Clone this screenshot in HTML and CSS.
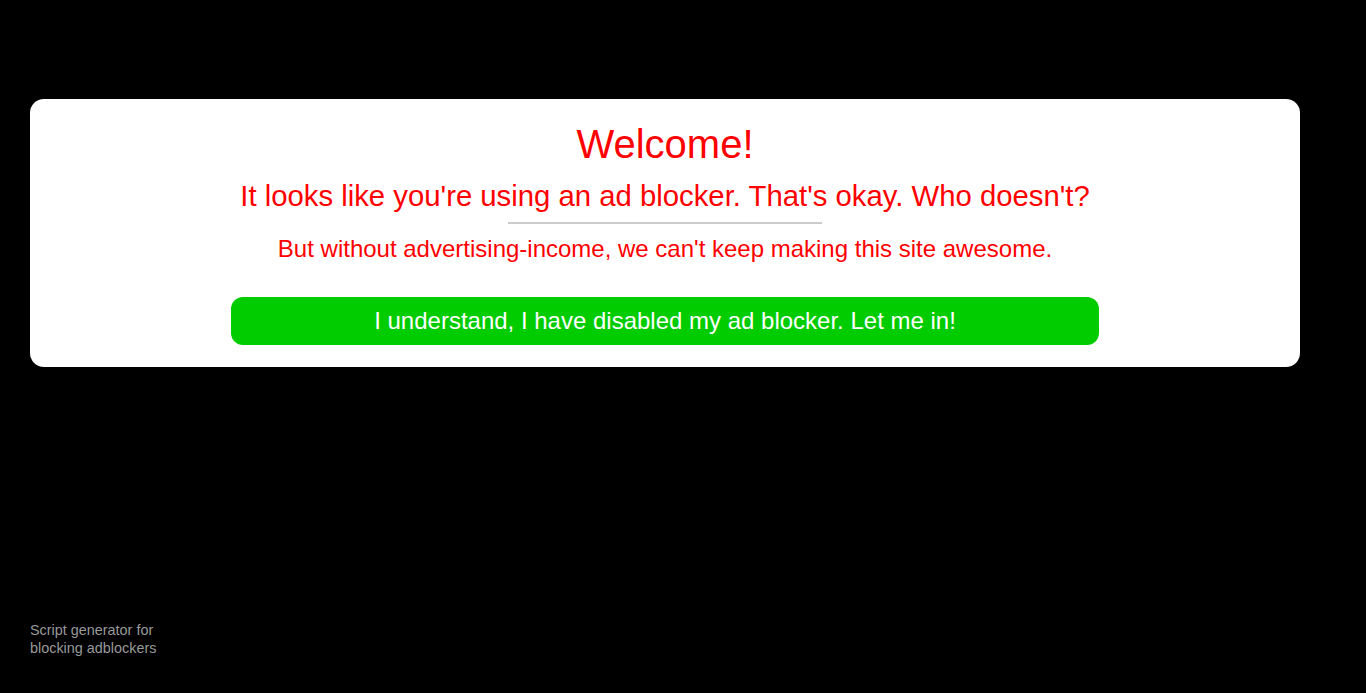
FILE: index.html
```html
<!DOCTYPE html>
<html lang="en">
<head>
<meta charset="utf-8">
<title>Welcome!</title>
<link rel="stylesheet" href="styles.css">
</head>
<body>
<div class="page">
  <div class="card">
    <h1 class="title">Welcome!</h1>
    <p class="sub">It looks like you're using an ad blocker. That's okay. Who doesn't?</p>
    <hr class="rule">
    <p class="msg">But without advertising-income, we can't keep making this site awesome.</p>
    <button class="btn" type="button">I understand, I have disabled my ad blocker. Let me in!</button>
  </div>
  <div class="footer">Script generator for blocking adblockers</div>
</div>
</body>
</html>
```
FILE: styles.css
```css
html, body {
  margin: 0;
  padding: 0;
  background: #000;
}
body {
  font-family: "Liberation Sans", Arial, sans-serif;
}
.page {
  min-height: 693px;
  display: flex;
  flex-direction: column;
  box-sizing: border-box;
  padding: 99px 0 36px 30px;
}
.card {
  width: 1270px;
  background: #fff;
  border-radius: 14px;
  padding: 22px 0 22px;
  text-align: center;
  box-sizing: border-box;
  display: flex;
  flex-direction: column;
  align-items: center;
}
.title {
  margin: 0;
  font-size: 40px;
  line-height: 46px;
  font-weight: normal;
  color: #ff0000;
}
.sub {
  margin: 12px 0 0;
  font-size: 29.3px;
  line-height: 33px;
  color: #ff0000;
}
.rule {
  width: 314px;
  height: 2px;
  border: 0;
  background: #cccccc;
  margin: 10px 0 11px;
}
.msg {
  margin: 0;
  font-size: 24px;
  line-height: 28px;
  color: #ff0000;
}
.btn {
  margin-top: 34px;
  width: 868px;
  height: 48px;
  border: 0;
  border-radius: 12px;
  background: #00cc00;
  color: #fff;
  font-family: "Liberation Sans", Arial, sans-serif;
  font-size: 24px;
  padding: 0;
  cursor: pointer;
}
.footer {
  margin-top: auto;
  width: 140px;
  font-size: 14.4px;
  line-height: 18px;
  color: #999999;
}
```
